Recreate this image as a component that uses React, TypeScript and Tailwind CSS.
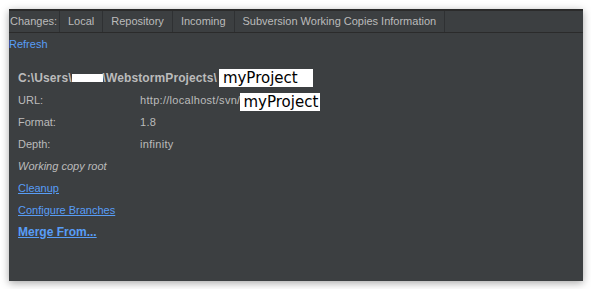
import React from "react";

const tabs = ["Local", "Repository", "Incoming", "Subversion Working Copies Information"];

const rows = [
  { label: "URL:", value: "http://localhost/svn/", blot: "myProject" },
  { label: "Format:", value: "1.8" },
  { label: "Depth:", value: "infinity" },
];

export default function App() {
  return (
    <div className="w-[591px] h-[289px] bg-white p-[9px_8px_8px_9px]" style={{ fontFamily: '"Liberation Sans", Arial, sans-serif' }}>
      <div className="h-[272px] w-[574px] bg-[#3c3f41] shadow-[0_2px_8px_rgba(0,0,0,0.35)] flex flex-col text-[11px] text-[#bbbbbb]">
        {/* Tab bar */}
        <div className="h-[2px] bg-[#2b2b2b]" />
        <div className="flex h-[22px] border-b border-[#2b2b2b] items-stretch">
          <div className="w-[51px] flex items-center pl-px border-r border-[#2f3133]">Changes:</div>
          {tabs.map((t) => (
            <div key={t} className="px-[8px] flex items-center border-r border-[#2f3133]">
              {t}
            </div>
          ))}
        </div>
        <div className="pt-[4px] text-[#589df6] leading-[15px]">Refresh</div>

        {/* Info */}
        <div className="pl-[9px] pt-[15px] flex flex-col">
          <div className="h-[22px] flex items-center font-bold text-[12px] tracking-[0.1px]">
            <span>C:\Users\</span>
            <span className="inline-block w-[31px] h-[8px] bg-white" />
            <span>\WebstormProjects\</span>
            <span className="bg-white text-black text-[15px] tracking-normal px-[4px] h-[18px] leading-[18px] w-[94px] font-normal ml-[2px]" style={{ fontFamily: '"DejaVu Sans", sans-serif' }}>myProject</span>
          </div>
          {rows.map((r) => (
            <div key={r.label} className="h-[22px] flex items-center">
              <span className="w-[122px]">{r.label}</span>
              <span className="tracking-[0.3px]">{r.value}</span>
              {r.blot && (
                <span className="bg-white text-black text-[15px] px-[3px] h-[18px] leading-[18px] w-[80px] mt-[3px]" style={{ fontFamily: '"DejaVu Sans", sans-serif' }}>
                  {r.blot}
                </span>
              )}
            </div>
          ))}
          <div className="h-[22px] flex items-center italic">Working copy root</div>
          <div className="h-[22px] flex items-center text-[#589df6] underline">Cleanup</div>
          <div className="h-[22px] flex items-center text-[#589df6] underline">Configure Branches</div>
          <div className="h-[22px] flex items-center text-[#589df6] underline font-bold text-[12px]">Merge From...</div>
        </div>
      </div>
    </div>
  );
}
